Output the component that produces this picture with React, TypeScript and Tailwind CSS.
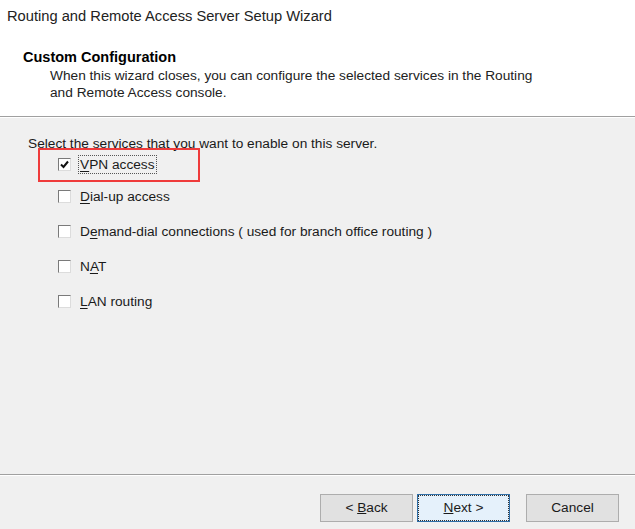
import React from "react";

const font = { fontFamily: '"Liberation Sans", Arial, sans-serif' };

function Check({ checked }: { checked?: boolean }) {
  return (
    <span className="flex h-[13px] w-[13px] shrink-0 items-center justify-center border border-t-[#7a7a7a] border-l-[#7a7a7a] border-r-[#dcdcdc] border-b-[#dcdcdc] bg-white">
      {checked && (
        <svg width="9" height="9" viewBox="0 0 9 9">
          <path d="M1 4.5 L3.5 7 L8 1.5" fill="none" stroke="#111" strokeWidth="2" />
        </svg>
      )}
    </span>
  );
}

function Option({
  pre,
  acc,
  post,
  checked,
  focused,
  className,
}: {
  pre?: string;
  acc: string;
  post: string;
  checked?: boolean;
  focused?: boolean;
  className?: string;
}) {
  return (
    <div className={"flex items-center gap-[7px] " + (className ?? "")}>
      <Check checked={checked} />
      <span
        className={
          focused
            ? "border border-dotted border-[#555] px-px leading-[17px]"
            : "border border-transparent px-px leading-[17px]"
        }
      >
        {pre}
        <span className="underline underline-offset-2">{acc}</span>
        {post}
      </span>
    </div>
  );
}

export default function App() {
  return (
    <div
      className="flex h-[529px] w-[635px] flex-col bg-[#f0f0f0] text-[13.7px] text-[#1a1a1a]"
      style={font}
    >
      <div className="h-[116px] bg-white">
        <div className="pl-[7px] pt-[5px] text-[14.7px] text-[#222]">
          Routing and Remote Access Server Setup Wizard
        </div>
        <div className="pl-[23px] pt-[22px]">
          <div className="text-[14.5px] font-bold leading-[17px] text-black">Custom Configuration</div>
          <div className="mt-[1px] pl-[27px] leading-[17px] text-[#222]">
            When this wizard closes, you can configure the selected services in the Routing
            <br />
            and Remote Access console.
          </div>
        </div>
      </div>
      <div className="h-[2px] border-t border-[#a0a0a0] bg-white" />
      <div className="flex-1 pl-[28px] pt-[17px]">
        <div className="leading-[17px]">
          Select the services that you want to enable on this server.
        </div>
        <div className="relative mt-[3px] flex flex-col gap-[16px] pl-[30px]">
          <div className="pointer-events-none absolute left-[10px] top-[-7px] h-[34px] w-[162px] border-2 border-[#ef3b3b]" />
          <Option acc="V" post="PN access" checked focused className="-mb-[3px]" />
          <Option acc="D" post="ial-up access" />
          <Option pre="D" acc="e" post="mand-dial connections ( used for branch office routing )" />
          <Option pre="N" acc="A" post="T" />
          <Option acc="L" post="AN routing" />
        </div>
      </div>
      <div className="h-[2px] border-t border-[#a0a0a0] bg-white" />
      <div className="flex h-[53px] items-start gap-[4px] pl-[320px] pt-[18px]">
        <button className="h-[28px] w-[93px] border border-[#adadad] bg-[#e1e1e1]">
          &lt; <span className="underline">B</span>ack
        </button>
        <button className="h-[28px] w-[93px] border border-[#2f6fa8] bg-[#e5f1fb] outline outline-1 -outline-offset-2 outline-dotted outline-[#333]">
          <span className="underline">N</span>ext &gt;
        </button>
        <button className="ml-[12px] h-[28px] w-[93px] border border-[#adadad] bg-[#e1e1e1]">
          Cancel
        </button>
      </div>
    </div>
  );
}
